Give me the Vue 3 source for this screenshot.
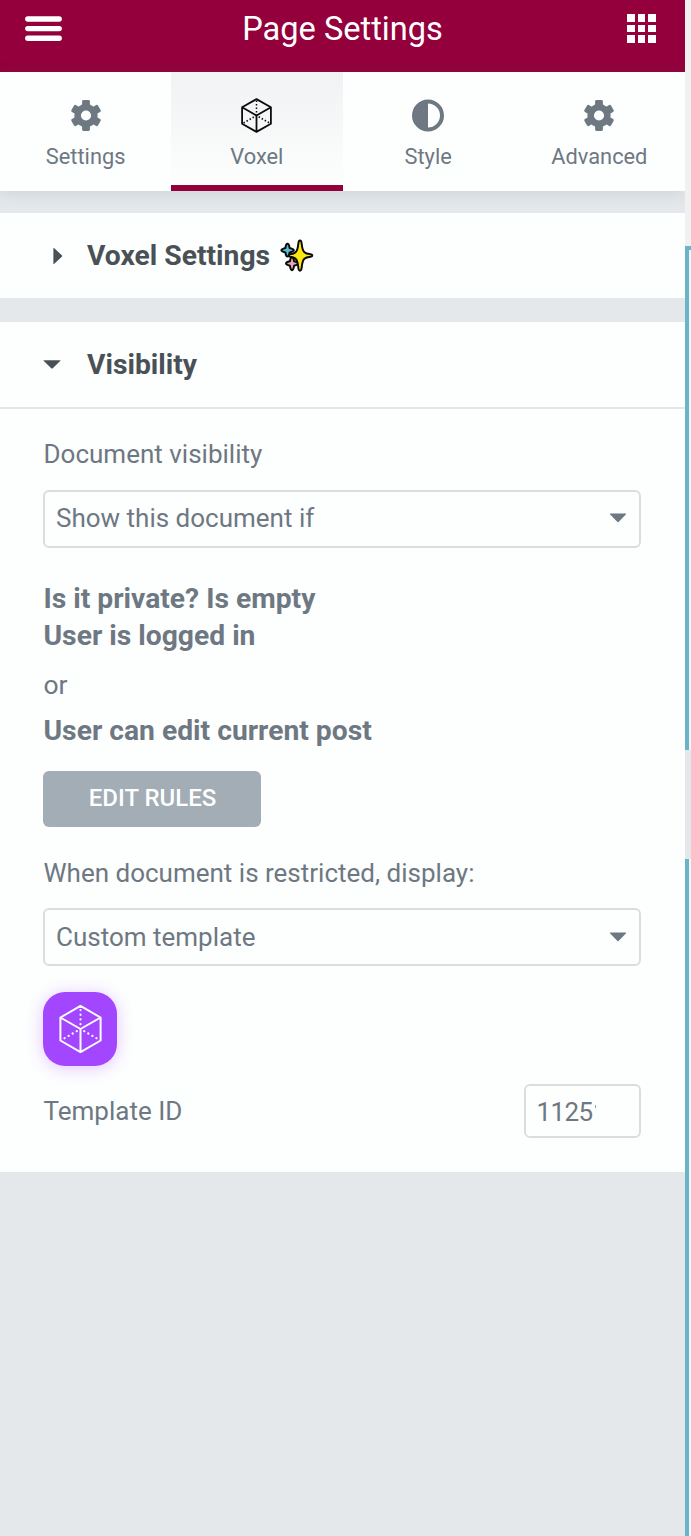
<script setup>
const tabs = [
  { label: 'Settings', icon: 'gear' },
  { label: 'Voxel', icon: 'cube', active: true },
  { label: 'Style', icon: 'contrast' },
  { label: 'Advanced', icon: 'gear' },
]
const teeth = [0, 60, 120, 180, 240, 300]
</script>

<template>
  <div class="screen">
    <main class="panel">
      <header class="topbar">
        <svg class="burger" width="37" height="26" viewBox="0 0 37 26">
          <path d="M2.8 3H34.2M2.8 12.6H34.2M2.8 22.2H34.2" stroke="#fff" stroke-width="5.4" stroke-linecap="round" />
        </svg>
        <h1 class="title">Page Settings</h1>
        <div class="dots"><i v-for="n in 9" :key="n"></i></div>
      </header>

      <nav class="tabs">
        <div v-for="tab in tabs" :key="tab.label" class="tab" :class="{ active: tab.active }">
          <svg v-if="tab.icon === 'gear'" class="icon" width="36" height="36" viewBox="-18 -17.5 36 36">
            <g fill="#6d7882">
              <rect v-for="a in teeth" :key="a" x="-3.9" y="-15.4" width="7.8" height="10" rx="1.4" :transform="`rotate(${a})`" />
              <path fill-rule="evenodd" d="M0-11.6A11.6 11.6 0 1 1 0 11.6A11.6 11.6 0 1 1 0-11.6ZM0-5.1A5.1 5.1 0 1 0 0 5.1A5.1 5.1 0 1 0 0-5.1Z" />
            </g>
          </svg>
          <svg v-else-if="tab.icon === 'contrast'" class="icon" width="36" height="36" viewBox="-18 -17.5 36 36">
            <circle r="14" fill="none" stroke="#6d7882" stroke-width="4" />
            <path d="M0-15A15 15 0 0 0 0 15Z" fill="#6d7882" />
          </svg>
          <svg v-else class="icon" width="36" height="36" viewBox="-17.5 -17.5 36 36" fill="none" stroke="#0b0d0f" stroke-width="1.8" stroke-linejoin="round">
            <path d="M0-16.4L14.4-8.3V8.3L0 16.4L-14.4 8.3V-8.3ZM-14.4-8.3L0 0L14.4-8.3M0 0V16.4" />
            <path d="M0-15V0M-13 7.5L0 0L13 7.5" stroke-dasharray="1.5 2" stroke-width="1.5" />
          </svg>
          <span class="tab-label">{{ tab.label }}</span>
        </div>
      </nav>

      <section class="section collapsed">
        <div class="heading">
          <span class="arrow"><svg width="20" height="20" viewBox="0 0 20 20"><path d="M5.4 2.6Q5.4 1.6 6.3 2.3L13.8 9.2Q14.6 10 13.8 10.8L6.3 17.7Q5.4 18.4 5.4 17.4Z" fill="#495157" /></svg></span>
          <h2>Voxel Settings</h2>
          <svg class="sparkles" width="34" height="34" viewBox="0 0 34 34" stroke="#0a0a0a" stroke-width="2" stroke-linejoin="round">
            <path d="M7.5 4.8Q9 4.8 9.6 9Q13.8 10 13.8 11.3Q13.8 12.6 9.6 13.5Q9 17.6 7.5 17.6Q6 17.6 5.4 13.5Q1.4 12.6 1.4 11.3Q1.4 10 5.4 9Q6 4.8 7.5 4.8Z" fill="#5bbdd8" />
            <path d="M12 18.2Q13.5 18.2 14.1 22.3Q18.2 23.2 18.2 24.5Q18.2 25.8 14.1 26.7Q13.5 31.2 12 31.2Q10.5 31.2 9.9 26.7Q6 25.8 6 24.5Q6 23.2 9.9 22.3Q10.5 18.2 12 18.2Z" fill="#e5a9b5" />
            <path d="M20 1.6Q21.4 1.6 21.7 5Q22.4 11.5 24.4 13.2Q26 14.7 30.5 15.2Q32.3 15.5 32.3 16.5Q32.3 17.5 30.5 17.8Q26 18.3 24.4 19.8Q22.4 21.5 21.7 28.5Q21.4 31.7 20 31.7Q18.6 31.7 18.3 28.5Q17.6 21.5 15.6 19.8Q14 18.3 10.2 17.8Q8.6 17.5 8.6 16.5Q8.6 15.5 10.2 15.2Q14 14.7 15.6 13.2Q17.6 11.5 18.3 5Q18.6 1.6 20 1.6Z" fill="#ffe80c" />
          </svg>
        </div>
      </section>

      <section class="section expanded">
        <div class="heading">
          <span class="arrow"><svg width="20" height="20" viewBox="0 0 20 20"><path d="M2 5.2H18Q19 5.2 18.2 6L11 13Q10 14 9 13L1.8 6Q1 5.2 2 5.2Z" fill="#495157" /></svg></span>
          <h2>Visibility</h2>
        </div>
        <div class="controls">
          <label class="field-label">Document visibility</label>
          <div class="select">
            <span>Show this document if</span>
            <svg width="18" height="10" viewBox="0 0 18 10"><path d="M1.4 .5H16.6Q17.6 .5 16.8 1.4L9.8 8.8Q9 9.5 8.2 8.8L1.2 1.4Q.4 .5 1.4 .5Z" fill="#6d7882" /></svg>
          </div>
          <div class="rules">
            <p>Is it private? Is empty</p>
            <p>User is logged in</p>
            <p class="or">or</p>
            <p>User can edit current post</p>
          </div>
          <button class="edit"><span>EDIT RULES</span></button>
          <label class="field-label restricted">When document is restricted, display:</label>
          <div class="select">
            <span>Custom template</span>
            <svg width="18" height="10" viewBox="0 0 18 10"><path d="M1.4 .5H16.6Q17.6 .5 16.8 1.4L9.8 8.8Q9 9.5 8.2 8.8L1.2 1.4Q.4 .5 1.4 .5Z" fill="#6d7882" /></svg>
          </div>
          <div class="badge">
            <svg width="48" height="52" viewBox="-24.5 -26 48 52" fill="none" stroke="#fff" stroke-width="2" stroke-linejoin="round">
              <path d="M0-23.1L20.1-11.5V11.5L0 23.1L-20.1 11.5V-11.5ZM-20.1-11.5L0 0L20.1-11.5M0 0V23.1" />
              <path d="M0-19V-3M-16 9.2L-3 1.7M16 9.2L3 1.7" stroke-dasharray="0.1 4.6" stroke-width="2.2" stroke-linecap="round" />
            </svg>
          </div>
          <div class="row">
            <label class="field-label">Template ID</label>
            <div class="input"><span>1125</span><i class="speck"></i></div>
          </div>
        </div>
      </section>
    </main>
    <aside class="preview">
      <div class="strip first"></div>
      <div class="handle"></div>
      <div class="strip second"></div>
    </aside>
  </div>
</template>

<style>
body { margin: 0; }
</style>

<style scoped>
* { box-sizing: border-box; }
.screen { display: flex; width: 691px; height: 1536px; overflow: hidden; font-family: Roboto, "Liberation Sans", sans-serif; color: #6d7882; background: #e4e8eb; }
.panel { width: 685px; flex: none; background: #e4e8eb; }
h1, h2, p { margin: 0; white-space: nowrap; }
.topbar { height: 72px; background: #93003c; display: grid; grid-template-columns: 87px 1fr 87px; padding-top: 14px; align-items: start; }
.burger { margin: 2px 0 0 25px; }
.title { color: #fff; font-size: 32.6px; line-height: 30px; font-weight: 400; text-align: center; }
.dots { display: grid; grid-template-columns: repeat(3, 7.5px); gap: 3px; margin-left: 29px; }
.dots i { width: 7.5px; height: 7.5px; background: #fff; }
.tabs { height: 119px; display: grid; grid-template-columns: repeat(4, 1fr); background: #fdfefe; box-shadow: 0 2px 14px rgba(90, 100, 110, .16); }
.tab { display: flex; flex-direction: column; align-items: center; padding-top: 25.5px; border-bottom: 6px solid transparent; }
.active { background: linear-gradient(#f0f2f3, #fdfefe) padding-box; border-bottom-color: #93003c; }
.icon { flex: none; }
.tab-label { font-size: 21.8px; line-height: 30px; margin-top: 8.5px; }
.section { background: #fdfefe; }
.collapsed { margin-top: 22px; height: 85px; }
.expanded { margin-top: 24px; height: 850px; }
.heading { height: 85px; display: flex; align-items: center; padding-left: 42px; }
.expanded .heading { height: 87px; border-bottom: 2px solid #e4e7e9; }
.arrow { width: 45px; display: flex; }
.collapsed .arrow svg { margin-left: 6px; }
h2 { font-size: 28.25px; line-height: 36px; font-weight: 700; color: #495157; }
.sparkles { margin-left: 10px; }
.controls { padding: 29px 44px 0 43px; }
.field-label { display: block; padding-left: .5px; font-size: 26px; line-height: 32px; white-space: nowrap; }
.select { margin-top: 20px; height: 58px; border: 2px solid #dadddf; border-radius: 6px; display: flex; align-items: center; justify-content: space-between; padding: 0 12.5px 2px 11px; font-size: 26px; white-space: nowrap; }
.rules { margin-top: 32px; padding-left: .5px; font-size: 28.25px; font-weight: 700; line-height: 37px; }
.or { font-size: 26.5px; font-weight: 400; margin: 12px 0 9px; }
.edit { display: flex; justify-content: center; align-items: center; margin: 22px 0 0; width: 218px; height: 56px; border: 0; border-radius: 6px; background: #a2adb5; color: #fff; font: 500 24px/30px Roboto, sans-serif; padding: 0 0 2px 1px; }
.restricted { margin-top: 30px; }
.restricted + .select { margin-top: 19px; padding-bottom: 0; }
.badge { margin-top: 26px; width: 74px; height: 74px; border-radius: 22px; background: #a346ff; display: flex; align-items: center; justify-content: center; padding-bottom: 1px; box-shadow: 0 2px 16px rgba(163, 70, 255, .3); }
.row { margin-top: 18px; display: flex; justify-content: space-between; align-items: center; }
.input { width: 117px; height: 54px; border: 2px solid #dadddf; border-radius: 6px; padding: 11px 0 0 10.5px; display: flex; font-size: 26px; letter-spacing: -.6px; line-height: 30px; }
.speck { width: 1.5px; height: 3px; margin: 8px 0 0 2px; background: #98a0a7; }
.preview { width: 6px; display: flex; flex-direction: column; background: #f1f1f2; padding-top: 246px; }
.strip { width: 6px; border-left: 4px solid #69b4c6; background: #eef7f8; }
.first { height: 504px; border-top: 4px solid #69b4c6; }
.handle { height: 109px; background: #e4e8eb; }
.second { flex: 1; }
</style>
